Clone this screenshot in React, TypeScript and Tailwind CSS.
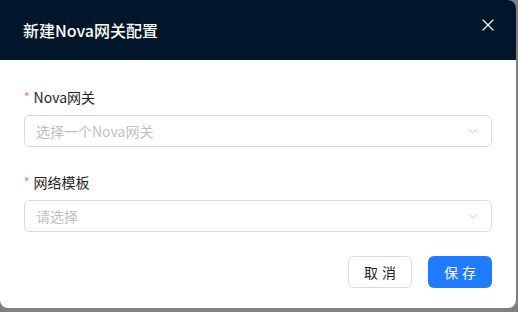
import { ChevronDown, X } from "lucide-react"

const fields = [
    { label: "Nova网关", placeholder: "选择一个Nova网关" },
    { label: "网络模板", placeholder: "请选择" },
]

export default function App() {
    return (
        <div
            className="h-[312px] w-[518px] overflow-hidden bg-[#808080]"
            style={{ fontFamily: '"Noto Sans CJK SC", "Noto Sans", sans-serif' }}
        >
            <div className="flex h-[308px] w-[516px] flex-col overflow-hidden rounded-b-lg rounded-tr-lg bg-white">
                <div className="flex h-[60px] shrink-0 items-center justify-between bg-[#01162a] pl-[23px] pr-[18px]">
                    <h2 className="text-[16px] font-medium leading-6 text-white">新建Nova网关配置</h2>
                    <X className="mb-[10px] h-5 w-5 text-white" strokeWidth={1.4} />
                </div>

                <div className="flex flex-col px-6 pt-[26px]">
                    {fields.map((field) => (
                        <div key={field.label} className="mb-6 flex flex-col">
                            <label className="mb-[7px] flex items-center text-[14px] leading-[22px] text-[#1f1f1f]">
                                <span className="mr-1 text-[12px] text-[#ff6b6b]">*</span>
                                {field.label}
                            </label>
                            <div className="flex h-8 items-center justify-between rounded-md border border-[#d9d9d9] pl-[11px] pr-[11px]">
                                <span className="text-[14px] text-[#bfbfbf]">{field.placeholder}</span>
                                <ChevronDown className="h-[14px] w-[14px] text-[#bfbfbf]" strokeWidth={1.5} />
                            </div>
                        </div>
                    ))}

                    <div className="flex justify-end gap-4">
                        <button
                            type="button"
                            className="h-8 w-16 rounded-md border border-[#d9d9d9] bg-white pl-[0.3em] text-[14px] tracking-[0.3em] text-[#1f1f1f]"
                        >
                            取消
                        </button>
                        <button
                            type="button"
                            className="h-8 w-16 rounded-md bg-[#1f7bff] pl-[0.3em] text-[14px] tracking-[0.3em] text-white"
                        >
                            保存
                        </button>
                    </div>
                </div>
            </div>
        </div>
    )
}
